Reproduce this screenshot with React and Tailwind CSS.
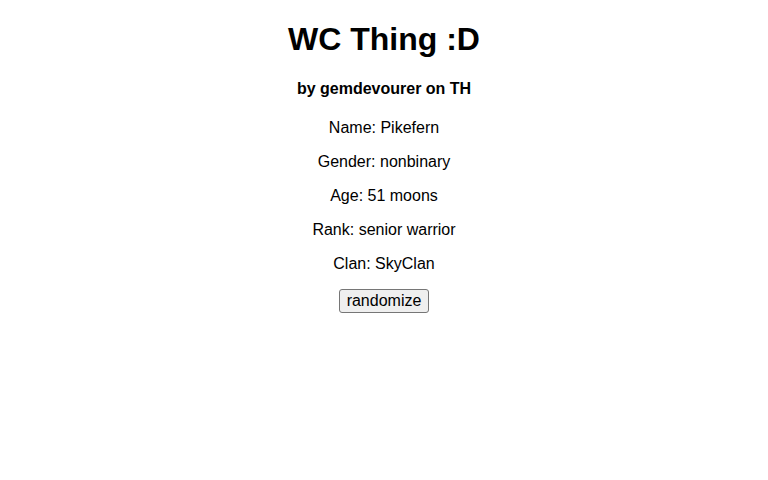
import React, { useState } from 'react';

const names = ['Pikefern', 'Ashwhisker', 'Mossleap', 'Rainpelt'];

export default function App() {
  const [cat] = useState({
    name: 'Pikefern',
    gender: 'nonbinary',
    age: '51 moons',
    rank: 'senior warrior',
    clan: 'SkyClan',
  });

  return (
    <div className="min-h-screen bg-white text-black text-center font-['Liberation_Sans',Arial,sans-serif]">
      <h1 className="pt-[21px] text-[32px] leading-[37px] font-bold">WC Thing :D</h1>
      <h4 className="mt-[22px] text-[16px] leading-[18px] font-bold">by gemdevourer on TH</h4>
      <div className="mt-[21px] flex flex-col items-center gap-4 text-[16px] leading-[18px]">
        <p>Name: {cat.name}</p>
        <p>Gender: {cat.gender}</p>
        <p>Age: {cat.age}</p>
        <p>Rank: {cat.rank}</p>
        <p>Clan: {cat.clan}</p>
      </div>
      <button
        className="mt-[16px] h-[24px] px-[7px] text-[16px] leading-[18px] bg-[#efefef] border border-[#767676] rounded-[3px] text-black"
        title={names.join(', ')}
      >
        randomize
      </button>
    </div>
  );
}
